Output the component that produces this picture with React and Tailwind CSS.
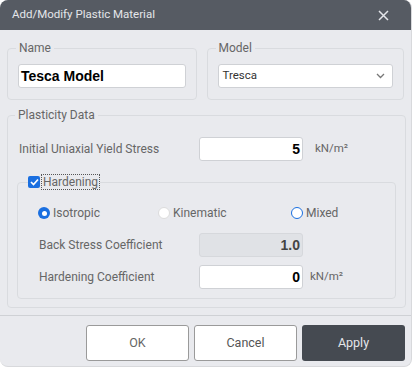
import React from "react";

const font = { fontFamily: 'Roboto, "Noto Sans", sans-serif' };

const Radio = ({ state, label, className }) => (
  <label className={"flex items-center gap-[3px] " + (className || "")}>
    {state === "checked" && (
      <span className="w-[12px] h-[12px] rounded-full bg-[#1a6fe0] flex items-center justify-center">
        <span className="w-[5px] h-[5px] rounded-full bg-white" />
      </span>
    )}
    {state === "focus" && (
      <span className="w-[12px] h-[12px] rounded-full bg-white border border-[#1a6fe0]" />
    )}
    {state === "off" && (
      <span className="w-[12px] h-[12px] rounded-full bg-white border border-[#dcdcdc]" />
    )}
    <span className="text-[12px] leading-[16px] text-[#666]">{label}</span>
  </label>
);

const NumberInput = ({ value, disabled }) => (
  <div
    className={
      "w-[104px] h-[24px] rounded-[3px] border flex items-center justify-end pr-[2px] " +
      (disabled
        ? "bg-[#e0e2e6] border-[#d6d8dc] text-[#444]"
        : "bg-white border-[#cfd1d5] text-black")
    }
  >
    <span className="text-[14px] font-bold font-['Liberation_Sans',sans-serif]">{value}</span>
  </div>
);

export default function App() {
  return (
    <div className="w-[414px] h-[370px] bg-white" style={font}>
      <div className="w-[412px] h-[367px] rounded-[8px] overflow-hidden bg-[#e9eaee] flex flex-col border-r border-b border-[#d8d9dc]">
        <div className="h-[30px] bg-[#565b63] flex items-center justify-between pl-[12px] pr-[22px]">
          <span className="text-[11.5px] text-[#e4e6ea]">Add/Modify Plastic Material</span>
          <svg width="11" height="11" viewBox="0 0 11 11">
            <path d="M1 1 L10 10 M10 1 L1 10" stroke="#e4e6ea" strokeWidth="1.5" />
          </svg>
        </div>

        <div className="px-[7px] pt-[10px] flex flex-col">
          <div className="flex gap-[10px]">
            <fieldset className="w-[190px] h-[60px] border border-[#d9dbdf] rounded-[4px] px-[10px]">
              <legend className="px-[3px] ml-[-2px] text-[12px] leading-[16px] text-[#666]">Name</legend>
              <div className="mt-[8px] h-[24px] bg-white border border-[#cfd1d5] rounded-[3px] flex items-center px-[2px]">
                <span className="text-[14px] font-bold text-black font-['Liberation_Sans',sans-serif]">
                  Tesca Model
                </span>
              </div>
            </fieldset>
            <fieldset className="w-[198px] h-[60px] border border-[#d9dbdf] rounded-[4px] px-[10px]">
              <legend className="px-[3px] ml-[-2px] text-[12px] leading-[16px] text-[#666]">Model</legend>
              <div className="mt-[8px] h-[24px] bg-white border border-[#cfd1d5] rounded-[3px] flex items-center justify-between pl-[4px] pr-[7px]">
                <span className="text-[11.5px] text-[#333]">Tresca</span>
                <svg width="9" height="6" viewBox="0 0 9 6">
                  <path d="M1 1 L4.5 4.5 L8 1" fill="none" stroke="#777" strokeWidth="1.3" />
                </svg>
              </div>
            </fieldset>
          </div>

          <fieldset className="mt-[7px] h-[201px] border border-[#d9dbdf] rounded-[4px] px-[9px]">
            <legend className="px-[3px] ml-[-2px] text-[12px] leading-[16px] text-[#666]">Plasticity Data</legend>
            <div className="mt-[14px] flex items-center">
              <span className="w-[182px] pl-[2px] text-[12px] text-[#666]">Initial Uniaxial Yield Stress</span>
              <NumberInput value="5" />
              <span className="ml-[12px] text-[11.5px] text-[#666]">kN/m²</span>
            </div>

            <fieldset className="mt-[13px] w-[379px] h-[125px] border border-[#d9dbdf] rounded-[4px] px-[20px]">
              <legend className="ml-[-10px] flex items-center">
                <span className="w-[12px] h-[12px] rounded-[2px] bg-[#1a6fe0] flex items-center justify-center">
                  <svg width="9" height="8" viewBox="0 0 9 8">
                    <path d="M1 4 L3.5 6.5 L8 1.5" fill="none" stroke="white" strokeWidth="1.7" />
                  </svg>
                </span>
                <span className="ml-[1px] px-[1px] border border-dotted border-[#555] text-[12px] leading-[14px] text-[#666]">
                  Hardening
                </span>
              </legend>
              <div className="mt-[15px] flex items-center">
                <Radio state="checked" label="Isotropic" className="w-[120px]" />
                <Radio state="off" label="Kinematic" className="w-[133px]" />
                <Radio state="focus" label="Mixed" />
              </div>
              <div className="mt-[12px] flex items-center">
                <span className="w-[161px] pl-[1px] text-[12px] text-[#666]">Back Stress Coefficient</span>
                <NumberInput value="1.0" disabled />
              </div>
              <div className="mt-[8px] flex items-center">
                <span className="w-[161px] pl-[1px] text-[12px] text-[#666]">Hardening Coefficient</span>
                <NumberInput value="0" />
                <span className="ml-[7px] text-[11.5px] text-[#666]">kN/m²</span>
              </div>
            </fieldset>
          </fieldset>
        </div>

        <div className="mt-[7px] border-t border-[#cfd1d5] flex justify-end gap-[5px] pt-[9px] pr-[6px]">
          <button className="w-[103px] h-[36px] bg-white border border-[#9a9a9a] rounded-[3px] text-[12.5px] text-[#666]">
            OK
          </button>
          <button className="w-[103px] h-[36px] bg-white border border-[#9a9a9a] rounded-[3px] text-[12.5px] text-[#555]">
            Cancel
          </button>
          <button className="w-[103px] h-[36px] bg-[#454a51] rounded-[3px] text-[12.5px] text-[#e4e6ea]">
            Apply
          </button>
        </div>
      </div>
    </div>
  );
}
